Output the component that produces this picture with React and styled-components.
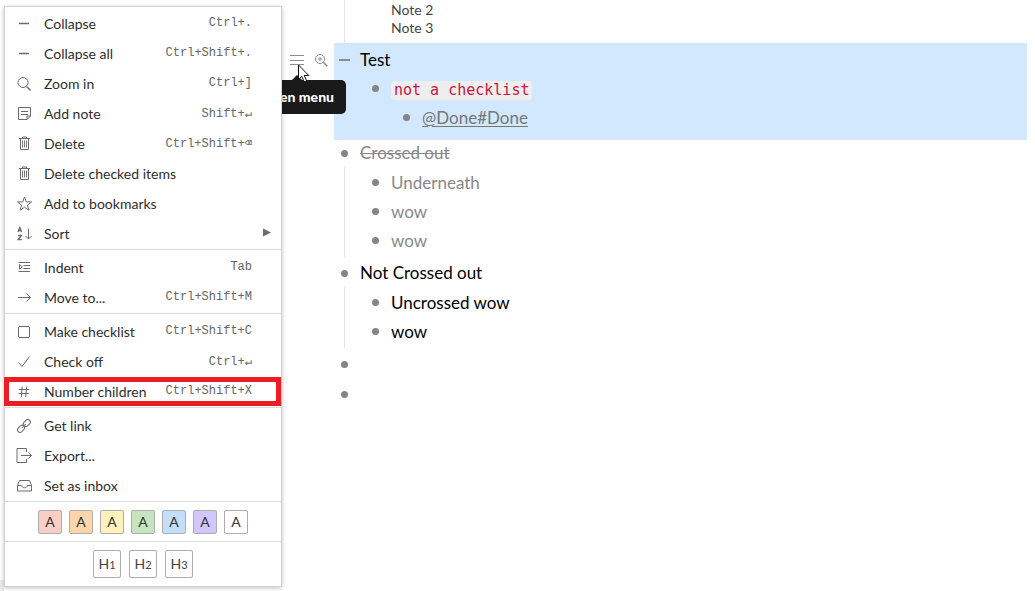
import React from "react";
import styled, { createGlobalStyle, css } from "styled-components";

const GlobalStyle = createGlobalStyle`
  * { box-sizing: border-box; }
  body {
    margin: 0;
    background: #fff;
    color: #111;
    font-family: Lato, "Open Sans", sans-serif;
  }
  button { font: inherit; color: inherit; cursor: pointer; }
  ul { list-style: none; margin: 0; padding: 0; }
`;

const Page = styled.div`
  position: relative;
  min-height: 100vh;
  overflow: hidden;
`;

/* ---------- outline ---------- */

const Outline = styled.main`
  padding: 0 8px 0 334px;
`;

const NoteBlock = styled.div`
  margin-left: 10px;
  padding: 1px 0 6px 46px;
  border-left: 1px solid #e4e4e4;
  font-size: 14px;
  line-height: 18px;
  color: #444;
`;

const NodeList = styled.ul`
  display: flex;
  flex-direction: column;
  gap: 2px;
`;

const Node = styled.li`
  ${(p) =>
    p.$selected &&
    css`
      background: #d1e8ff;
      padding: 2px 0 8px;
      margin-bottom: -3px;
    `}
`;

const Children = styled.ul`
  margin-left: 10px;
  padding: ${(p) => (p.$guide ? "1px 0 2px" : "0")};
  padding-left: 20px;
  border-left: 1px solid ${(p) => (p.$guide ? "#e2e2e2" : "transparent")};
`;

const NodeRow = styled.div`
  display: flex;
  align-items: center;
  height: ${(p) => (p.$child ? 29 : 28)}px;
  font-size: 17px;
  line-height: 28px;
  color: ${(p) => (p.$muted ? "#888" : "#000")};
`;

const HoverRow = styled(NodeRow)`
  margin-left: -46px;
`;

const BulletCell = styled.span`
  display: flex;
  justify-content: center;
  flex: none;
  width: 21px;
  margin-right: 5px;
`;

const Bullet = styled.span`
  width: 7px;
  height: 7px;
  border-radius: 50%;
  background: #858585;
`;

const Dash = styled.span`
  width: 11px;
  height: 2px;
  background: #8a8f94;
`;

const NodeTools = styled.div`
  display: flex;
  gap: 6px;
  width: 46px;
`;

const ToolButton = styled.button`
  display: flex;
  padding: 0;
  border: 0;
  background: none;
  color: #8c8c8c;
`;

const Code = styled.code`
  margin-top: 3px;
  padding: 0 3px;
  border-radius: 4px;
  background: #eee;
  color: #cc1440;
  font: 15px/19px "DejaVu Sans Mono", monospace;
`;

const Strike = styled.s`
  text-decoration-thickness: 1px;
`;

const TagLink = styled.a`
  color: #777;
  text-decoration: underline;
  text-decoration-thickness: 1px;
  text-underline-offset: 2px;
`;

/* ---------- tooltip and pointer ---------- */

const Tooltip = styled.div`
  position: absolute;
  left: 248px;
  top: 80px;
  width: 98px;
  padding: 0 12px;
  border-radius: 5px;
  background: #1a1a1a;
  color: #fff;
  font-size: 14px;
  font-weight: 900;
  line-height: 34px;
  text-align: right;
  white-space: nowrap;

  &::before {
    content: "";
    position: absolute;
    left: 44px;
    top: -5px;
    border: 5px solid transparent;
    border-top: 0;
    border-bottom-color: #1a1a1a;
  }
`;

const Pointer = styled.svg`
  position: absolute;
  left: 297px;
  top: 64px;
`;

const Corner = styled.div`
  position: absolute;
  left: 0;
  top: 580px;
  bottom: 0;
  width: 4px;
  background: #ebebeb;
`;

/* ---------- menu ---------- */

const Menu = styled.nav`
  position: absolute;
  left: 4px;
  top: 6px;
  width: 278px;
  border: 1px solid #d2d2d2;
  background: #fff;
  box-shadow: 0 1px 4px rgba(0, 0, 0, 0.25);
`;

const Group = styled.div`
  padding-top: 2px;
  & + & {
    padding-top: 3px;
    border-top: 1px solid #dcdcdc;
  }
`;

const MenuItem = styled.button`
  position: relative;
  display: flex;
  align-items: center;
  width: 100%;
  height: 30px;
  padding: 0 29px 0 9px;
  border: 0;
  background: none;
  text-align: left;
  font-size: 14px;
  line-height: 20px;
  color: #2e2e2e;

  ${(p) =>
    p.$marked &&
    css`
      &::after {
        content: "";
        position: absolute;
        inset: 0 0 1px -1px;
        border: 5px solid #ee1c25;
      }
    `}
`;

const Label = styled.span`
  flex: 1;
  margin-left: 10px;
  white-space: nowrap;
`;

const Shortcut = styled.kbd`
  padding-bottom: ${(p) => (p.$low ? 0 : 3)}px;
  font: 12px/16px "Liberation Mono", "DejaVu Sans Mono", monospace;
  color: #666;
  white-space: nowrap;
`;

const Submenu = styled.svg`
  margin: 0 -20px 3px 0;
`;

const ButtonBar = styled.div`
  display: flex;
  justify-content: center;
  gap: 8px;
  padding: 8px 0;
  border-top: 1px solid #dcdcdc;
`;

const Swatches = styled(ButtonBar)`
  gap: 7px;
  padding: 8px 0 7px;
`;

const Swatch = styled.button`
  width: 24px;
  height: 24px;
  padding: 0;
  border: 1px solid #adadad;
  border-radius: 2px;
  background: ${(p) => p.$color};
  font-size: 14px;
  line-height: 22px;
  color: #333;
`;

const HeadingButton = styled.button`
  width: 28px;
  height: 28px;
  padding: 0;
  border: 1px solid #adadad;
  border-radius: 2px;
  background: #fff;
  font-size: 14px;
  line-height: 26px;
  color: #444;

  small { font-size: 11px; }
`;

const shapes = {
  dash: <path d="M5 9.5h10" strokeWidth="1.5" />,
  zoom: (
    <>
      <circle cx="9" cy="8.5" r="5" />
      <path d="M12.6 12.4l4 4" strokeWidth="1.4" />
    </>
  ),
  note: (
    <>
      <path d="M4.5 3.500h12v8.5l-3.500 3.5H4.500z" />
      <path d="M16.500 12H13V15.500M7 7.500h7M7 10.500h7" />
    </>
  ),
  trash: (
    <>
      <path d="M5 4.500h11M8.500 4.500v-1.500h4v1.500M6.500 4.500v11h8v-11" />
      <path d="M8.500 6.500v7M10.500 6.500v7M12.500 6.500v7" strokeWidth="0.900" />
    </>
  ),
  star: <path d="M10.500 3l1.800 4.900h5.200l-4.100 3.300 1.500 5-4.400-3-4.400 3 1.500-5L3.500 7.900h5.200z" />,
  sort: (
    <>
      <path d="M4 8L5.800 3.500 7.600 8M4.600 6.500h2.500M4.200 11.500h3.300l-3.300 4.200h3.600" strokeWidth="1.300" />
      <path d="M14.500 4.500v10.500M11.500 12L14.500 15l3-3" />
    </>
  ),
  indent: <path d="M4.500 4.500h11.500M9.500 7.500h6.500M9.500 10.500h6.500M4.500 13.500h11.500M5.500 6.500v4.700L8.300 8.900z" />,
  arrow: <path d="M4 9.500h12.500M12.500 5.500l4 4-4 4" />,
  box: <rect x="4.500" y="4.500" width="11" height="11" rx="1.500" />,
  check: <path d="M4.500 10.500l3.500 4 7.500-10" />,
  hash: <path d="M8.300 4.500l-1 10.500M12.700 4.500l-1 10.500M5 7.500h10.200M4.600 11.500h10.200" />,
  link: (
    <g transform="rotate(-45 10 10)">
      <rect x="2" y="7.400" width="8" height="5" rx="2.500" />
      <rect x="10" y="7.400" width="8" height="5" rx="2.500" />
      <path d="M7.500 9.900h5" />
    </g>
  ),
  exit: <path d="M12.500 6V2.500h-9.500v14h9.500v-3.500M7 9.500h10.500M14.500 6.500l3 3-3 3" />,
  inbox: (
    <>
      <path d="M3.500 9.500l2-5h10l2 5v5.500h-14z" />
      <path d="M3.500 9.500h4c.5 3 5.500 3 6 0h4" />
    </>
  ),
};

function Icon({ name }) {
  return (
    <svg width="20" height="20" viewBox="0 0 20 20" fill="none" stroke="#6b6b6b" aria-hidden="true">
      {shapes[name]}
    </svg>
  );
}

const groups = [
  [
    ["dash", "Collapse", "Ctrl+."],
    ["dash", "Collapse all", "Ctrl+Shift+."],
    ["zoom", "Zoom in", "Ctrl+]"],
    ["note", "Add note", "Shift+↵"],
    ["trash", "Delete", "Ctrl+Shift+⌫"],
    ["trash", "Delete checked items"],
    ["star", "Add to bookmarks"],
    ["sort", "Sort"],
  ],
  [
    ["indent", "Indent", "Tab"],
    ["arrow", "Move to...", "Ctrl+Shift+M"],
  ],
  [
    ["box", "Make checklist", "Ctrl+Shift+C"],
    ["check", "Check off", "Ctrl+↵"],
    ["hash", "Number children", "Ctrl+Shift+X"],
  ],
  [
    ["link", "Get link"],
    ["exit", "Export..."],
    ["inbox", "Set as inbox"],
  ],
];

const swatches = ["#f8cfc5", "#fcd6ab", "#fff2bd", "#c6e5be", "#c2def8", "#d3c6fa", "#ffffff"];

function Item({ child, muted, children, nested, guide }) {
  return (
    <Node>
      <NodeRow $child={child} $muted={muted}>
        <BulletCell><Bullet /></BulletCell>
        {children}
      </NodeRow>
      {nested && <Children $guide={guide}>{nested}</Children>}
    </Node>
  );
}

export default function App() {
  return (
    <Page>
      <GlobalStyle />
      <Outline>
        <NoteBlock>
          <div>Note 2</div>
          <div>Note 3</div>
        </NoteBlock>
        <NodeList>
          <Node $selected>
            <HoverRow $child>
              <NodeTools>
                <ToolButton aria-label="Open menu">
                  <svg width="18" height="18" viewBox="0 0 18 18" fill="none" stroke="currentColor">
                    <path d="M2 4.500h14M2 9.500h14M2 13.500h14" />
                  </svg>
                </ToolButton>
                <ToolButton aria-label="Zoom in">
                  <svg width="18" height="18" viewBox="0 0 18 18" fill="none" stroke="currentColor">
                    <circle cx="8" cy="8" r="4.500" />
                    <path d="M11.300 11.300l4 4" strokeWidth="1.500" />
                    <path d="M5.800 8h4.400M8 5.800v4.400" />
                  </svg>
                </ToolButton>
              </NodeTools>
              <BulletCell><Dash /></BulletCell>
              Test
            </HoverRow>
            <Children>
              <Item
                child
                nested={
                  <Item child>
                    <TagLink href="#done-user">@Done</TagLink>
                    <TagLink href="#done">#Done</TagLink>
                  </Item>
                }
              >
                <Code>not a checklist</Code>
              </Item>
            </Children>
          </Node>
          <Item
            muted
            guide
            nested={
              <>
                <Item child muted>Underneath</Item>
                <Item child muted>wow</Item>
                <Item child muted>wow</Item>
              </>
            }
          >
            <Strike>Crossed out</Strike>
          </Item>
          <Item
            guide
            nested={
              <>
                <Item child>Uncrossed wow</Item>
                <Item child>wow</Item>
              </>
            }
          >
            Not Crossed out
          </Item>
          <Item />
          <Item />
        </NodeList>
      </Outline>

      <Corner />
      <Tooltip role="tooltip">Open menu</Tooltip>
      <Menu aria-label="Item actions">
        {groups.map((items, i) => (
          <Group key={i}>
            {items.map(([icon, label, keys]) => (
              <MenuItem key={label} $marked={label === "Number children"}>
                <Icon name={icon} />
                <Label>{label}</Label>
                {keys && <Shortcut $low={/[↵⌫]/.test(keys)}>{keys}</Shortcut>}
                {label === "Sort" && (
                  <Submenu width="10" height="10" viewBox="0 0 10 10" fill="#6a6a6a">
                    <path d="M1 0.500l8 4-8 4z" />
                  </Submenu>
                )}
              </MenuItem>
            ))}
          </Group>
        ))}
        <Swatches>
          {swatches.map((c) => (
            <Swatch key={c} $color={c} aria-label={`Color ${c}`}>A</Swatch>
          ))}
        </Swatches>
        <ButtonBar>
          {[1, 2, 3].map((n) => (
            <HeadingButton key={n}>H<small>{n}</small></HeadingButton>
          ))}
        </ButtonBar>
      </Menu>
      <Pointer width="14" height="20" viewBox="0 0 14 20" fill="#fff" stroke="#111" aria-hidden="true">
        <path d="M1.500 1v14.500l3.300-3.200 2.400 5.500 2.400-1-2.400-5.300h4.600z" />
      </Pointer>
    </Page>
  );
}
